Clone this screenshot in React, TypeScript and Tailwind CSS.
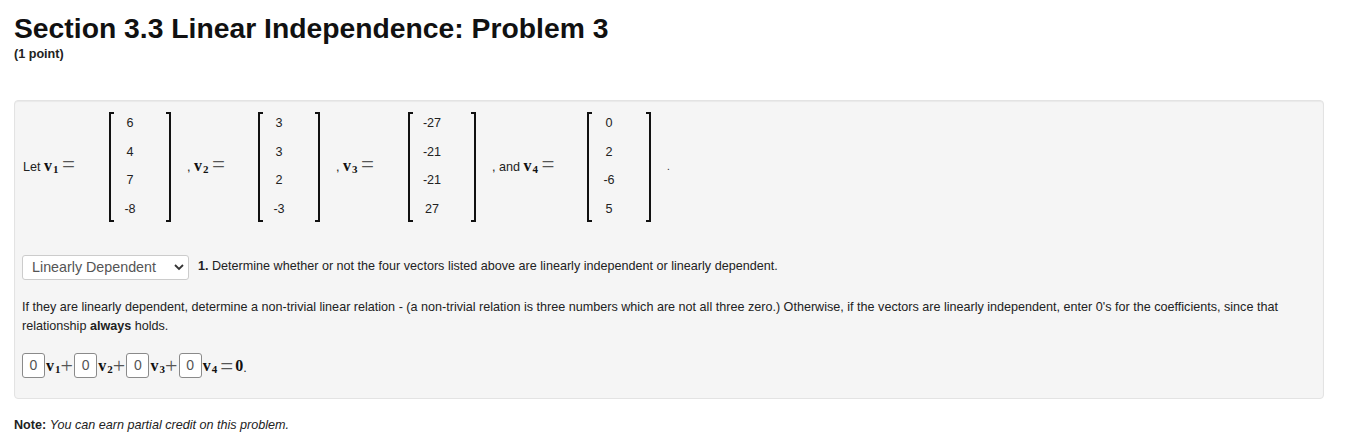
const serif = "font-['Liberation_Serif',serif]";

function V({ n }: { n: number }) {
  return (
    <span className={`${serif} whitespace-nowrap text-[#111]`}>
      <b className="text-[16px]">v</b>
      <b className="relative top-[2px] ml-[1px] text-[11px]">{n}</b>
    </span>
  );
}

function Eq({ className = "" }: { className?: string }) {
  return <span className={`${serif} relative top-[1px] text-[23px] leading-none text-[#555] ${className}`}>=</span>;
}

function Plus() {
  return <span className={`${serif} mr-[1.3px] text-[22px] leading-none text-[#555]`}>+</span>;
}

function Matrix({ rows, width }: { rows: string[]; width: number }) {
  return (
    <div className="flex h-[110px] shrink-0 items-stretch">
      <div className="w-[5px] border-y-2 border-l-2 border-[#111]" />
      <div className="flex flex-col justify-between pt-[3px] pr-[20px] pb-[5px] text-center" style={{ width }}>
        {rows.map((r, i) => (
          <div key={i} className="h-[16px] text-[12.6px] leading-[16px]">{r}</div>
        ))}
      </div>
      <div className="w-[5px] border-y-2 border-r-2 border-[#111]" />
    </div>
  );
}

function Box() {
  return (
    <span className="mr-[1px] flex h-[25px] w-[23px] shrink-0 items-center justify-center rounded-[3px] border border-[#8a8a8a] bg-white text-[14px] text-[#555]">
      0
    </span>
  );
}

export default function App() {
  return (
    <div className="h-[442px] w-[1363px] overflow-hidden bg-white font-['Liberation_Sans',sans-serif] text-[12.6px] text-[#222]">
      <div className="px-[14px] pt-[12px]">
        <h1 className="text-[28.3px] leading-[32px] font-bold text-[#111]">Section 3.3 Linear Independence: Problem 3</h1>
        <p className="mt-[2px] leading-[16px] font-bold">(1 point)</p>

        <div className="mt-[38px] h-[299px] w-[1310px] rounded-[4px] border border-[#e3e3e3] bg-[#f5f5f5] pt-[11px] pl-[7px] shadow-[inset_0_1px_1px_rgba(0,0,0,0.05)]">
          <div className="flex h-[110px] items-center">
            <span className="ml-[1px] w-[86px] pb-[5px] whitespace-nowrap">
              Let <V n={1} /> <Eq />
            </span>
            <Matrix rows={["6", "4", "7", "-8"]} width={52} />
            <span className="ml-[16px] w-[71px] pb-[5px] whitespace-nowrap">
              , <V n={2} /> <Eq />
            </span>
            <Matrix rows={["3", "3", "2", "-3"]} width={52} />
            <span className="ml-[16px] w-[72px] pb-[5px] whitespace-nowrap">
              , <V n={3} /> <Eq />
            </span>
            <Matrix rows={["-27", "-21", "-21", "27"]} width={58} />
            <span className="ml-[16px] w-[95px] pb-[5px] whitespace-nowrap">
              , and <V n={4} /> <Eq />
            </span>
            <Matrix rows={["0", "2", "-6", "5"]} width={54} />
            <span className="ml-[16px] pb-[2px] text-[10px]">.</span>
          </div>

          <div className="mt-[33px] flex items-center">
            <div className="flex h-[25px] w-[167px] items-center justify-between rounded-[3px] border border-[#ccc] bg-white pr-[4px] pl-[9px] text-[14.3px] text-[#555]">
              <span>Linearly Dependent</span>
              <svg width="10" height="7" viewBox="0 0 10 7" fill="none" stroke="#333" strokeWidth="1.8">
                <path d="M1 1l4 4 4-4" />
              </svg>
            </div>
            <p className="ml-[9px] pb-[3px]">
              <b>1.</b> Determine whether or not the four vectors listed above are linearly independent or linearly dependent.
            </p>
          </div>

          <p className="mt-[18px] w-[1285px] leading-[19px]">
            If they are linearly dependent, determine a non-trivial linear relation - (a non-trivial relation is three numbers which are not all three zero.) Otherwise, if the vectors are linearly independent, enter 0's for the coefficients, since that relationship <b>always</b> holds.
          </p>

          <div className="mt-[17px] flex items-center">
            <Box />
            <V n={1} />
            <Plus />
            <Box />
            <V n={2} />
            <Plus />
            <Box />
            <V n={3} />
            <Plus />
            <Box />
            <V n={4} />
            <Eq className="mr-[2px] ml-[3px]" />
            <b className={`${serif} text-[16px] text-[#111]`}>0</b>
            <span className="relative top-[3px]">.</span>
          </div>
        </div>

        <p className="mt-[18px] leading-[16px]">
          <b>Note:</b> <i>You can earn partial credit on this problem.</i>
        </p>
      </div>
    </div>
  );
}
